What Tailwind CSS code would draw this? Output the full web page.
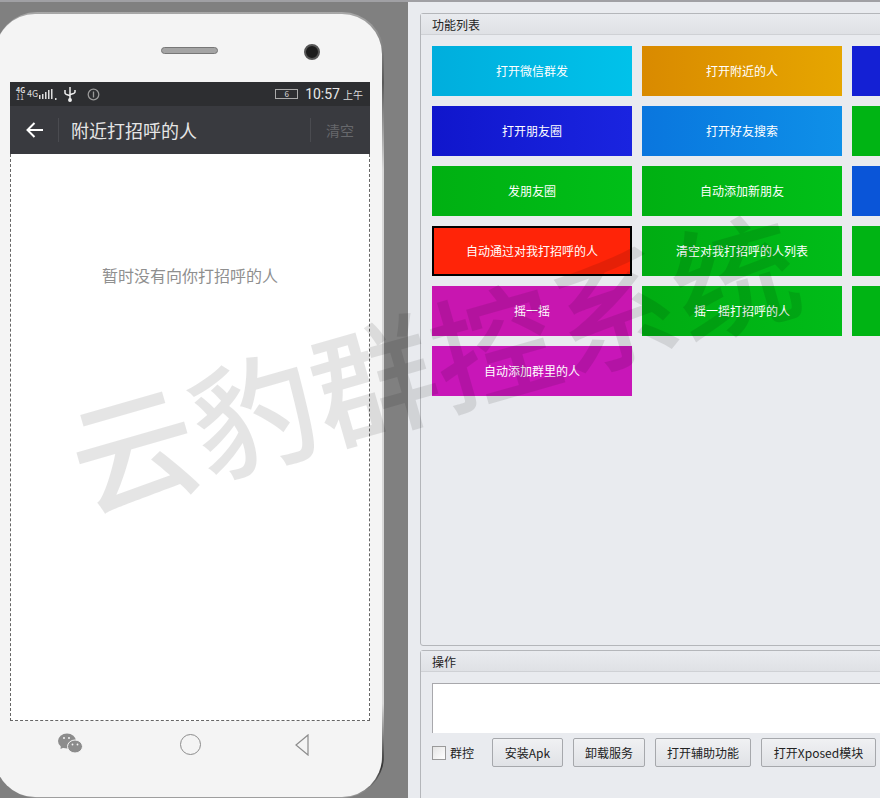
<!DOCTYPE html>
<html lang="zh-CN">
<head>
    <meta charset="UTF-8">
    <title>云豹群控系统</title>
    <script src="https://cdn.jsdelivr.net/npm/@tailwindcss/browser@4"></script>
</head>
<body class="bg-[#808080]">
<div class="relative flex w-[880px] h-[798px] overflow-hidden bg-[#808080] font-['Noto_Sans_CJK_SC','Liberation_Sans',sans-serif]">

    <!-- phone -->
    <div class="w-[408px] shrink-0 pt-[10px] border-t-2 border-[#a0a0a4]">
        <div class="-ml-[5px] w-[389px] h-[786px] pt-[2px] pr-[2px] pb-[1px] rounded-[42px] bg-[linear-gradient(to_bottom,#a8a8a8_0%,#5a5a5a_9%,#d8d8d8_20%,#d8d8d8_88%,#333333_96%,#a0a0a0_100%)]">
        <div class="w-[387px] h-full bg-[#f4f4f4] rounded-[40px] flex flex-col">
            <div class="h-[68px] relative">
                <div class="absolute left-[166px] top-[33px] w-[57px] h-[7px] rounded-full bg-[#a4a4a4] border border-[#777]"></div>
                <div class="absolute left-[309px] top-[30px] w-[16px] h-[16px] rounded-full bg-[#1c1c1c] border-2 border-[#555]"></div>
            </div>
            <div class="ml-[15px] w-[360px] flex flex-col">
                <div class="h-[24px] bg-[#2d2e31] flex items-center pl-[6px] pr-[7px] text-white">
                    <span class="text-[7px] leading-[7px] w-[9px] text-[#ddd] font-bold">4G<br><span class="font-normal">11</span></span>
                    <span class="text-[9px] ml-[2px] text-[#ddd]">4G</span>
                    <svg width="20" height="11" viewBox="0 0 20 11" class="ml-[1px]"><g fill="#ddd"><rect x="0" y="6" width="1.5" height="4"/><rect x="3" y="5" width="1.5" height="5"/><rect x="6" y="3" width="1.5" height="7"/><rect x="9" y="1" width="1.5" height="9"/><rect x="12" y="0" width="1.5" height="10"/><rect x="16" y="9" width="1.5" height="2"/></g></svg>
                    <svg width="14" height="16" viewBox="0 0 14 16" class="ml-[4px]" fill="none" stroke="#eee" stroke-width="1.5"><path d="M7 1v14M2 4v3c0 2 5 2 5 3M12 4v2c0 2-5 2-5 3"/><circle cx="7" cy="14" r="1.2" fill="#eee"/></svg>
                    <svg width="13" height="13" viewBox="0 0 13 13" class="ml-[10px]" fill="none" stroke="#999" stroke-width="1.3"><circle cx="6.5" cy="6.5" r="5.3"/><path d="M6.5 3.5v6"/></svg>
                    <div class="ml-auto flex h-[10px] w-[23px] items-center justify-center border border-[#aaa] text-[8px] leading-none text-[#ddd]">6</div>
                    <span class="ml-[7px] font-['Roboto',sans-serif] text-[14px] text-[#e8e8e8]">10:57</span>
                    <span class="ml-[3px] text-[10px] text-[#ddd]">上午</span>
                </div>
                <div class="h-[48px] bg-[#393a3f] flex items-center">
                    <svg width="20" height="18" viewBox="0 0 20 18" class="ml-[15px]" fill="none" stroke="#fff" stroke-width="2"><path d="M18 9H2M9.5 2 2.500 9l7 7"/></svg>
                    <div class="ml-[13px] h-[24px] w-px bg-[#4a4b50]"></div>
                    <span class="ml-[12px] text-[18px] text-[#e6e6e6]">附近打招呼的人</span>
                    <div class="ml-auto h-[24px] w-px bg-[#4a4b50]"></div>
                    <span class="ml-[15px] mr-[16px] text-[14px] text-[#67686c]">清空</span>
                </div>
                <div class="h-[567px] bg-white border-x border-b border-dashed border-[#666] pt-[109px] text-center text-[16px] text-[#8f8f8f]">暂时没有向你打招呼的人</div>
            </div>
            <div class="relative h-[60px]">
                <svg width="25" height="21" viewBox="0 0 25 21" class="absolute left-[63px] top-[12px]" fill="#8c8c8c"><ellipse cx="9" cy="8" rx="9" ry="7.500"/><path d="M3 12 2.500 16 7 14z"/><ellipse cx="17" cy="13.500" rx="7.500" ry="6.500" stroke="#f4f4f4"/><g fill="#f4f4f4"><circle cx="6" cy="5" r="1"/><circle cx="11" cy="5" r="1"/><circle cx="14.500" cy="11.500" r=".9"/><circle cx="19.500" cy="11.500" r=".9"/></g></svg>
                <div class="absolute left-[185px] top-[13px] w-[21px] h-[21px] rounded-full border border-[#8c8c8c]"></div>
                <svg width="14" height="22" viewBox="0 0 14 22" class="absolute left-[300px] top-[13px]" fill="none" stroke="#8c8c8c" stroke-width="1.200"><path d="M13 1 1 11l12 10z"/></svg>
            </div>
        </div>
        </div>
    </div>

    <!-- right side -->
    <div class="flex-1 min-w-0 bg-[#e9ebef] border-t-2 border-[#a0a0a4] pl-[12px] pt-[11px]">
        <div class="h-[633px] w-[600px] border border-[#b4b6ba] rounded-t-[3px] rounded-b-[3px]">
            <div class="h-[21px] bg-linear-to-b from-[#e9ebef] to-[#dfe1e5] border-b border-[#cfd1d5] pl-[11px] text-[12px] leading-[21px] text-[#222]">功能列表</div>
            <div class="grid grid-cols-[200px_200px_200px] gap-x-[10px] gap-y-[10px] pl-[11px] pt-[11px] text-[12px] text-white">
                <div class="h-[50px] flex items-center justify-center bg-linear-to-r from-[#00aedd] to-[#00c2ea]">打开微信群发</div>
                <div class="h-[50px] flex items-center justify-center bg-linear-to-r from-[#d98a00] to-[#e6a600]">打开附近的人</div>
                <div class="h-[50px] bg-[#1420d4]"></div>
                <div class="h-[50px] flex items-center justify-center bg-linear-to-r from-[#1016cc] to-[#1a24e0]">打开朋友圈</div>
                <div class="h-[50px] flex items-center justify-center bg-linear-to-r from-[#0a76de] to-[#0f90e8]">打开好友搜索</div>
                <div class="h-[50px] bg-[#00b414]"></div>
                <div class="h-[50px] flex items-center justify-center bg-linear-to-r from-[#00b012] to-[#00bf18]">发朋友圈</div>
                <div class="h-[50px] flex items-center justify-center bg-linear-to-r from-[#00b012] to-[#00c018]">自动添加新朋友</div>
                <div class="h-[50px] bg-[#0a55d8]"></div>
                <div class="h-[50px] flex items-center justify-center bg-[#ff2408] border-2 border-black">自动通过对我打招呼的人</div>
                <div class="h-[50px] flex items-center justify-center bg-linear-to-r from-[#00ac12] to-[#00bc18]">清空对我打招呼的人列表</div>
                <div class="h-[50px] bg-[#00b414]"></div>
                <div class="h-[50px] flex items-center justify-center bg-[#c816b0]">摇一摇</div>
                <div class="h-[50px] flex items-center justify-center bg-linear-to-r from-[#00ac12] to-[#00bc18]">摇一摇打招呼的人</div>
                <div class="h-[50px] bg-[#00b414]"></div>
                <div class="h-[50px] flex items-center justify-center bg-[#c816b8]">自动添加群里的人</div>
            </div>
        </div>
        <div class="mt-[4px] h-[160px] w-[600px] border border-[#b4b6ba] rounded-t-[3px]">
            <div class="h-[21px] bg-linear-to-b from-[#e9ebef] to-[#dfe1e5] border-b border-[#cfd1d5] pl-[11px] text-[12px] leading-[21px] text-[#222]">操作</div>
            <div class="ml-[11px] mt-[11px] h-[50px] w-[560px] bg-white border-t border-l border-[#a8a8ac]"></div>
            <div class="ml-[11px] mt-[5px] flex items-center text-[12px] text-[#222]">
                <div class="w-[14px] h-[14px] border border-[#9a9a9a] bg-linear-to-br from-[#e4e4e4] to-white"></div>
                <span class="ml-[4px]">群控</span>
                <div class="ml-[18px] h-[29px] w-[71px] flex items-center justify-center rounded-[2px] border border-[#a6a8ac] bg-linear-to-b from-[#f0f1f3] to-[#e0e2e6]">安装Apk</div>
                <div class="ml-[10px] h-[29px] w-[72px] flex items-center justify-center rounded-[2px] border border-[#a6a8ac] bg-linear-to-b from-[#f0f1f3] to-[#e0e2e6]">卸载服务</div>
                <div class="ml-[10px] h-[29px] w-[96px] flex items-center justify-center rounded-[2px] border border-[#a6a8ac] bg-linear-to-b from-[#f0f1f3] to-[#e0e2e6]">打开辅助功能</div>
                <div class="ml-[10px] h-[29px] w-[115px] flex items-center justify-center rounded-[2px] border border-[#a6a8ac] bg-linear-to-b from-[#f0f1f3] to-[#e0e2e6]">打开Xposed模块</div>
            </div>
        </div>
    </div>

    <!-- watermark over everything -->
    <div class="absolute left-[72px] top-[398px] origin-left -rotate-[16deg] whitespace-nowrap text-[125px] font-medium leading-none text-black/10 pointer-events-none">云豹群控系统</div>
</div>
</body>
</html>
